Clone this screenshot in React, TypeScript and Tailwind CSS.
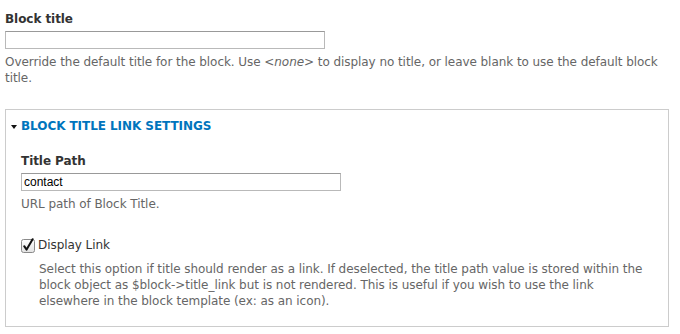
function Checkbox() {
  return (
    <svg width="14" height="15" viewBox="0 0 14 15" className="shrink-0 overflow-visible">
      <defs>
        <linearGradient id="cbg" x1="0" y1="0" x2="0" y2="1">
          <stop offset="0" stopColor="#ffffff" />
          <stop offset="1" stopColor="#e2e2e2" />
        </linearGradient>
      </defs>
      <rect x="0.5" y="1.5" width="13" height="13" rx="2" fill="url(#cbg)" stroke="#8a8a8a" />
      <path d="M3.2 8.2 L5.6 11.6 L11.6 1.2" fill="none" stroke="#111" strokeWidth="2" strokeLinecap="round" strokeLinejoin="round" />
    </svg>
  );
}

export default function App() {
  return (
    <div
      className="bg-white w-[680px] h-[334px] pt-[11px] pl-[5px] text-[#333] tracking-[-0.06px]"
      style={{ fontFamily: "'DejaVu Sans', sans-serif" }}
    >
      <div className="w-[664px]">
        <div className="text-[12px] leading-[16px] font-bold mb-[4px]">Block title</div>
        <input
          type="text"
          className="block w-[320px] h-[18px] border border-[#b9b9b9] border-t-[#999] bg-white outline-none"
        />
        <div className="mt-[5px] text-[12px] leading-[16px] text-[#666]">
          Override the default title for the block. Use <em>&lt;none&gt;</em> to display no title, or leave blank to use the default block title.
        </div>

        <fieldset className="mt-[23px] border border-[#ccc] pt-[8px] pl-[15px] pr-[15px] pb-[17px]">
          <div className="flex items-center h-[16px] text-[12px] leading-[16px] font-bold text-[#0074bd] uppercase -ml-[10px]">
            <svg width="6" height="4" viewBox="0 0 6 4" className="mr-[4px] mt-[1px]">
              <path d="M0 0 H6 L3 4 Z" fill="#111" />
            </svg>
            Block title link settings
          </div>

          <div className="mt-[19px] text-[12px] leading-[16px] font-bold">Title Path</div>
          <input
            type="text"
            defaultValue="contact"
            className="block mt-[4px] w-[320px] h-[18px] border border-[#b9b9b9] border-t-[#999] bg-white outline-none px-[2px] text-[12px] text-black tracking-normal"
            style={{ fontFamily: "'Liberation Sans', sans-serif" }}
          />
          <div className="mt-[5px] text-[12px] leading-[16px] text-[#666]">URL path of Block Title.</div>

          <div className="mt-[25px] flex items-center h-[16px] text-[12px] leading-[16px]">
            <Checkbox />
            <span className="ml-[3px]">Display Link</span>
          </div>
          <div className="mt-[8px] ml-[18px] text-[12px] leading-[16px] text-[#666]">
            Select this option if title should render as a link. If deselected, the title path value is stored within the block object as $block-&gt;title_link but is not rendered. This is useful if you wish to use the link elsewhere in the block template (ex: as an icon).
          </div>
        </fieldset>
      </div>
    </div>
  );
}
